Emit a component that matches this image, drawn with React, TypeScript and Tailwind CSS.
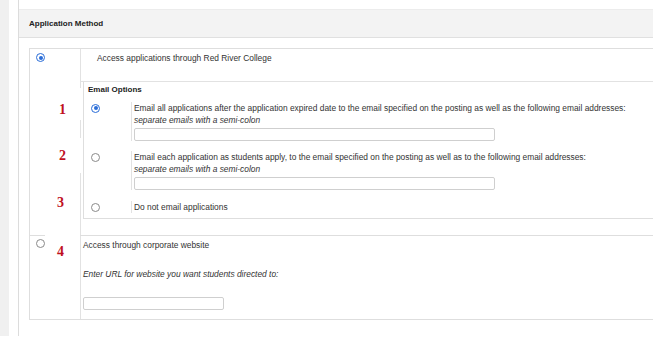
import type { ReactNode } from 'react'

const Radio = ({ checked }: { checked?: boolean }) =>
  checked ? (
    <span className="flex h-[9px] w-[9px] items-center justify-center rounded-full border-[1.5px] border-[#2a6dd8] bg-white">
      <span className="h-[4px] w-[4px] rounded-full bg-[#2a6dd8]" />
    </span>
  ) : (
    <span className="block h-[9px] w-[9px] rounded-full border border-[#8a8a8a] bg-white" />
  )

const Marker = ({ n, className }: { n: string; className: string }) => (
  <span
    className={`absolute bg-white font-['Liberation_Serif',serif] text-[14px] font-bold leading-[14px] text-[#c0101e] ${className}`}
  >
    {n}
  </span>
)

const TextInput = ({ className }: { className: string }) => (
  <div className={`h-[13px] rounded-[2px] border border-[#cfcfcf] bg-white ${className}`} />
)

const EmailRow = ({
  checked,
  className,
  children
}: {
  checked?: boolean
  className: string
  children: ReactNode
}) => (
  <div className={`flex ${className}`}>
    <div className="w-[48px] shrink-0 border-r border-[#e2e2e2] pl-[7px]">
      <div className="pt-[1.5px]">
        <Radio checked={checked} />
      </div>
    </div>
    <div className="flex-1 pl-[2px]">{children}</div>
  </div>
)

export default function App() {
  return (
    <div className="flex h-[357px] w-[670px] items-start overflow-hidden bg-white font-['Liberation_Sans',Arial,sans-serif] text-[8.4px] leading-[12px] text-[#333]">
      <div className="h-[336px] w-[9px] bg-[#f0f0f0]" />
      <div className="ml-[9px] h-[336px] w-[635px] border-l border-[#dcdcdc] pt-[9px]">
        <div className="flex h-[29px] items-center border-b border-t border-[#e0e0e0] border-t-[#ececec] bg-[#f3f3f3] pl-[10px] text-[8px] font-bold text-[#222]">
          Application Method
        </div>

        <div className="ml-[10px] mt-[10px] border-b border-l border-t border-[#dedede]">
          {/* Red River College */}
          <div className="flex border-b border-[#dedede]">
            <div className="relative w-[51px] shrink-0 border-r border-[#e2e2e2] pl-[6px] pt-[4px]">
              <Radio checked />
              <Marker n="1" className="left-[26px] top-[39px] w-[25px] pb-[3px] pl-[3px] pt-[15px]" />
              <Marker n="2" className="left-[26px] top-[89px] w-[25px] pb-[10px] pl-[3px] pt-[11px]" />
              <Marker n="3" className="left-[24px] top-[147px] px-[3px]" />
            </div>
            <div className="flex-1">
              <div className="h-[33px] border-b border-[#e2e2e2] pl-[16px] pt-[3px]">
                Access applications through Red River College
              </div>
              <div className="ml-[2px] border-b border-l border-[#dedede]">
                <div className="h-[16px] pl-[4px] pt-[2px] text-[8px] font-bold text-[#222]">Email Options</div>
                <EmailRow checked className="pt-[4px]">
                  <div>
                    Email all applications after the application expired date to the email specified on the posting as
                    well as the following email addresses:
                  </div>
                  <div className="italic">separate emails with a semi-colon</div>
                  <TextInput className="mt-[2px] w-[361px]" />
                </EmailRow>
                <EmailRow className="pt-[10px]">
                  <div>
                    Email each application as students apply, to the email specified on the posting as well as to the
                    following email addresses:
                  </div>
                  <div className="italic">separate emails with a semi-colon</div>
                  <TextInput className="mt-[2px] w-[361px]" />
                </EmailRow>
                <EmailRow className="pb-[5px] pt-[11px]">
                  <div>Do not email applications</div>
                </EmailRow>
              </div>
              <div className="h-[16px]" />
            </div>
          </div>

          {/* Corporate website */}
          <div className="flex">
            <div className="relative w-[51px] shrink-0 border-r border-[#e2e2e2] pl-[6px] pt-[3px]">
              <Radio />
              <Marker n="4" className="-top-[1px] left-[15px] w-[35px] pb-[2px] pl-[12px] pt-[10px]" />
            </div>
            <div className="flex-1 pb-[9px] pl-[2px] pt-[3px]">
              <div>Access through corporate website</div>
              <div className="mt-[17px] italic">Enter URL for website you want students directed to:</div>
              <TextInput className="mt-[17px] w-[141px]" />
            </div>
          </div>
        </div>
      </div>
    </div>
  )
}
